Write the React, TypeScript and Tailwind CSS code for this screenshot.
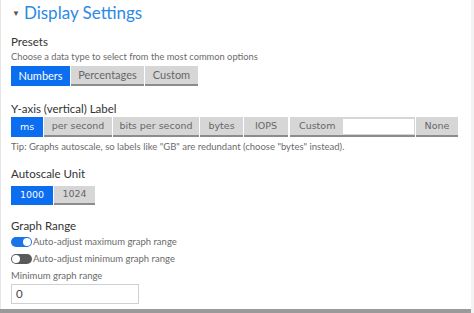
const presets = [
  { label: "Numbers", w: "w-[59px]" },
  { label: "Percentages", w: "w-[73px]" },
  { label: "Custom", w: "w-[53px]" },
];
const labels = [
  { label: "ms", w: "w-[32px]" },
  { label: "per second", w: "w-[68px]" },
  { label: "bits per second", w: "w-[86px]" },
  { label: "bytes", w: "w-[43px]" },
  { label: "IOPS", w: "w-[44px]" },
];

const grayBtn = "border-b-2 border-[#8c8c8c] bg-[#d6d6d6] text-[#666]";
const blueBtn = "bg-[#0b6df0] text-white";

function Toggle({ on }: { on: boolean }) {
  return (
    <span
      className={`relative inline-block h-[10px] w-[21px] shrink-0 rounded-full ${
        on ? "bg-[#1a73e8]" : "bg-[#5a5a5a]"
      }`}
    >
      <span
        className={`absolute top-[1px] h-[8px] w-[8px] rounded-full bg-white ${
          on ? "right-[1px]" : "left-[1px]"
        }`}
      />
    </span>
  );
}

export default function App() {
  return (
    <div className="h-[313px] w-[474px] overflow-hidden bg-[#f3f3f3] font-['Lato',sans-serif]">
      <div className="h-[309px] w-[471px] border-l border-[#e6e6e6] bg-white pl-[10px]">
        <div className="flex h-[25px] items-center">
          <span className="ml-[1px] mr-[4px] text-[8px] text-[#555]">▼</span>
          <h1 className="text-[17px] leading-[22px] text-[#2a8ae6]">Display Settings</h1>
        </div>

        <p className="mt-[10px] text-[11.5px] leading-[14px] text-[#333]">Presets</p>
        <p className="mt-[1px] text-[9.3px] leading-[13px] text-[#6b6b6b]">
          Choose a data type to select from the most common options
        </p>
        <div className="mt-[3px] flex h-[20px] gap-[1px] text-[11px]">
          {presets.map((p, i) => (
            <span
              key={p.label}
              className={`flex items-center justify-center whitespace-nowrap ${p.w} ${
                i === 0 ? blueBtn : grayBtn
              }`}
            >
              {p.label}
            </span>
          ))}
        </div>

        <p className="mt-[16px] text-[11.5px] leading-[14px] text-[#333]">Y-axis (vertical) Label</p>
        <div className="mt-[1px] flex h-[20px] gap-[1px] whitespace-nowrap font-['DejaVu_Sans',sans-serif] text-[9.5px]">
          {labels.map((l, i) => (
            <span
              key={l.label}
              className={`flex items-center justify-center ${l.w} ${i === 0 ? blueBtn : grayBtn}`}
            >
              {l.label}
            </span>
          ))}
          <span className={`ml-[1px] flex w-[125px] items-center gap-[8px] pl-[9px] pr-[1px] ${grayBtn}`}>
            Custom
            <span className="h-[15px] w-[75px] bg-white" />
          </span>
          <span className={`flex w-[42px] items-center justify-center ${grayBtn}`}>None</span>
        </div>
        <p className="mt-[4px] text-[9.5px] leading-[12px] text-[#6b6b6b]">
          Tip: Graphs autoscale, so labels like "GB" are redundant (choose "bytes" instead).
        </p>

        <p className="mt-[14px] text-[11.5px] leading-[14px] text-[#333]">Autoscale Unit</p>
        <div className="mt-[5px] flex h-[19px] gap-[1px] font-['DejaVu_Sans',sans-serif] text-[9.5px]">
          <span className={`flex w-[42px] items-center justify-center ${blueBtn}`}>1000</span>
          <span className={`flex w-[41px] items-center justify-center ${grayBtn}`}>1024</span>
        </div>

        <p className="mt-[14px] text-[11.5px] leading-[14px] text-[#333]">Graph Range</p>
        <div className="mt-[2px] flex items-center gap-[1px] text-[9.5px] leading-[13px] text-[#6b6b6b]">
          <Toggle on />
          Auto-adjust maximum graph range
        </div>
        <div className="mt-[4px] flex items-center gap-[1px] text-[9.5px] leading-[13px] text-[#6b6b6b]">
          <Toggle on={false} />
          Auto-adjust minimum graph range
        </div>
        <p className="mt-[4px] text-[9.5px] leading-[13px] text-[#6b6b6b]">Minimum graph range</p>
        <div className="mt-[2px] flex h-[20px] w-[128px] items-center border border-[#d0d0d0] px-[4px] text-[11.5px] text-[#444]">
          0
        </div>
      </div>
      <div className="h-[4px] w-[471px] bg-[#9a9a9a]" />
    </div>
  );
}
